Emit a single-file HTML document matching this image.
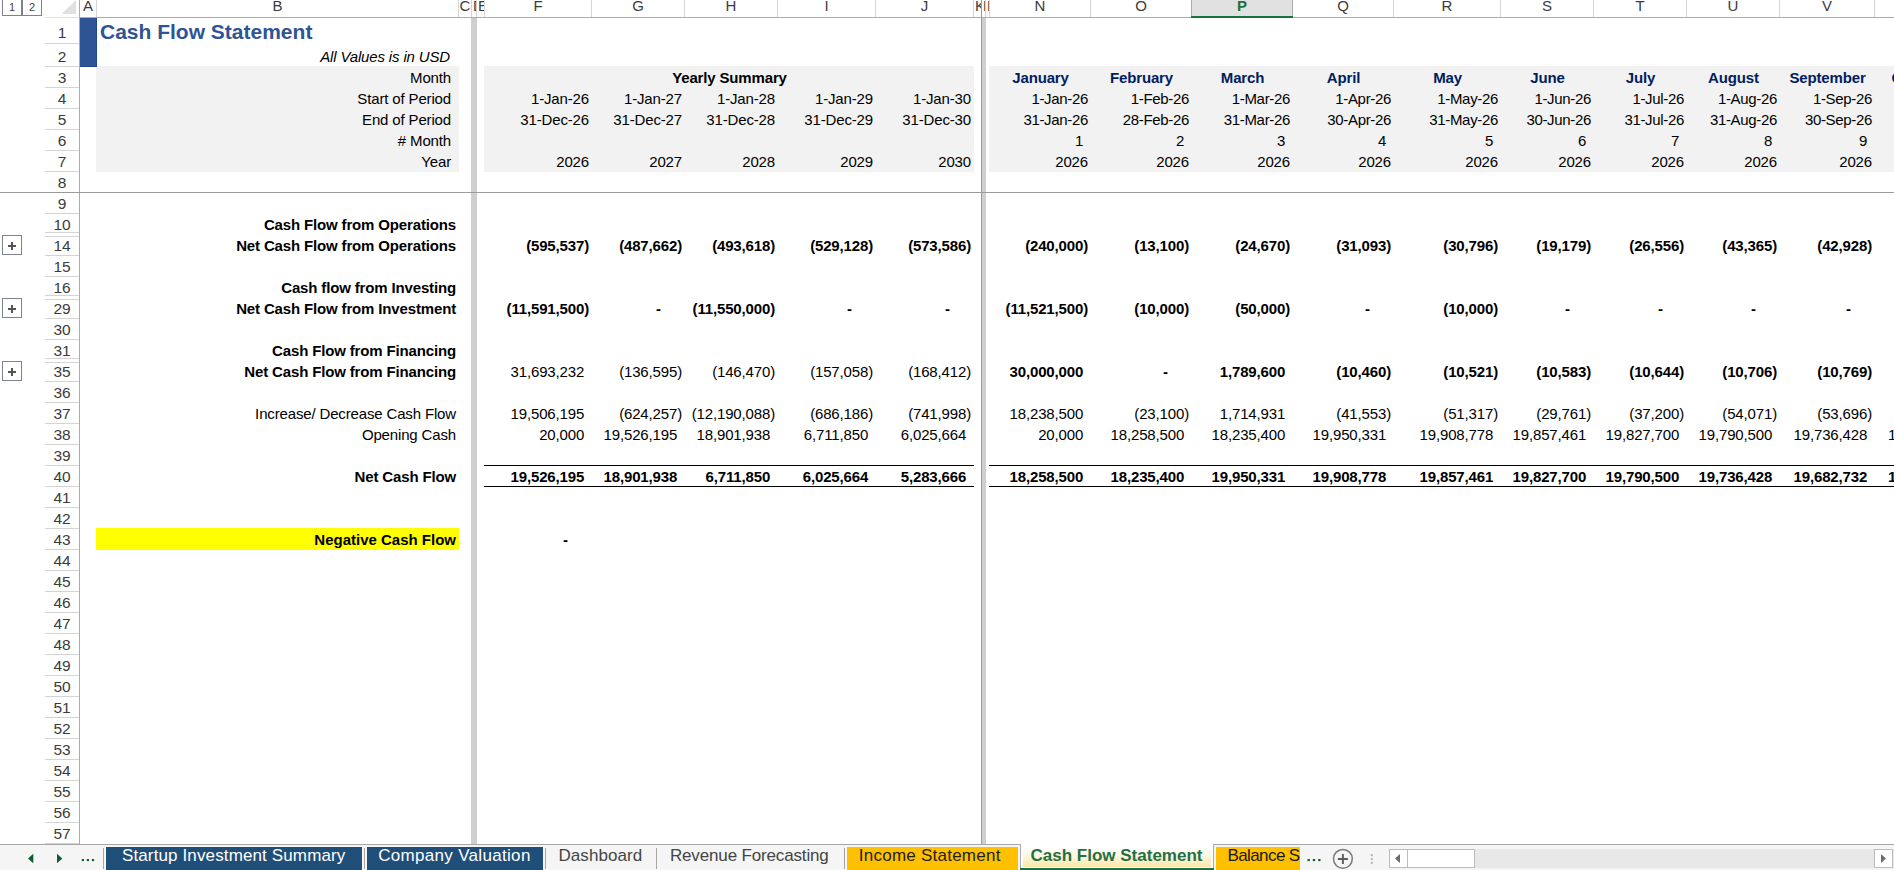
<!DOCTYPE html><html><head><meta charset="utf-8"><title>Cash Flow Statement</title><style>
html,body{margin:0;padding:0;}
body{width:1894px;height:870px;position:relative;overflow:hidden;background:#fff;font-family:"Liberation Sans",sans-serif;font-size:15px;color:#000;letter-spacing:-0.15px;}
div{position:absolute;box-sizing:border-box;white-space:nowrap;}
.ch{top:0;height:17px;line-height:12px;text-align:center;font-size:15px;letter-spacing:0;color:#3b3b3b;border-right:1px solid #d4d4d4;overflow:hidden;}
.rh{left:45px;width:34px;text-align:center;font-size:15.5px;letter-spacing:0;color:#3b3b3b;border-bottom:1px solid #d4d4d4;}
.c{height:21px;line-height:21px;text-align:right;padding-right:3px;overflow:visible;}
.b{font-weight:bold;}
.h{visibility:hidden;}
.fill{background:#f2f2f2;}
.tab{top:847px;height:23px;line-height:17px;font-size:17px;text-align:center;}
.sep{width:1px;background:#b4b4b4;top:849px;height:20px;}
</style></head><body>
<div style="left:96px;top:66px;width:363px;height:106px;background:#f2f2f2;"></div>
<div style="left:484px;top:66px;width:490px;height:106px;background:#f2f2f2;"></div>
<div style="left:989px;top:66px;width:905px;height:106px;background:#f2f2f2;"></div>
<div style="left:96px;top:528px;width:363px;height:22px;background:#ffff00;"></div>
<div style="left:80px;top:18px;width:17px;height:49px;background:#2f5496;border-right:1px solid #1f4690;border-bottom:1px solid #1f4690;"></div>
<div style="left:471px;top:18px;width:6px;height:826px;background:#d0cece;"></div>
<div style="left:982px;top:18px;width:4px;height:826px;background:#d0cece;"></div>
<div class="ch" style="left:80px;width:17px;">A</div>
<div class="ch" style="left:97px;width:362px;">B</div>
<div class="ch" style="left:459px;width:13px;">C</div>
<div class="ch" style="left:472px;width:5px;text-align:left;padding-left:1px;">D</div>
<div class="ch" style="left:477px;width:8px;text-align:left;padding-left:1px;">E</div>
<div class="ch" style="left:485px;width:107px;">F</div>
<div class="ch" style="left:592px;width:93px;">G</div>
<div class="ch" style="left:685px;width:93px;">H</div>
<div class="ch" style="left:778px;width:98px;">I</div>
<div class="ch" style="left:876px;width:98px;">J</div>
<div class="ch" style="left:974px;width:8px;text-align:left;padding-left:1px;border-right:none;">K</div>
<div class="ch" style="left:982px;width:4px;text-align:left;padding-left:1px;">L</div>
<div class="ch" style="left:986px;width:4px;text-align:left;padding-left:1px;">M</div>
<div class="ch" style="left:990px;width:101px;">N</div>
<div class="ch" style="left:1091px;width:101px;">O</div>
<div class="ch" style="left:1192px;width:101px;background:#e1e1e1;color:#17733f;font-weight:bold;border-right:1px solid #ababab;">P</div>
<div class="ch" style="left:1293px;width:101px;">Q</div>
<div class="ch" style="left:1394px;width:107px;">R</div>
<div class="ch" style="left:1501px;width:93px;">S</div>
<div class="ch" style="left:1594px;width:93px;">T</div>
<div class="ch" style="left:1687px;width:93px;">U</div>
<div class="ch" style="left:1780px;width:95px;">V</div>
<div class="ch" style="left:1875px;width:90px;">W</div>
<div style="left:45px;top:17px;width:34px;height:1px;background:#e1e1e1;"></div>
<div style="left:79px;top:17px;width:1815px;height:1px;background:#ababab;"></div>
<div style="left:1191px;top:0px;width:1px;height:16px;background:#ababab;"></div>
<div style="left:1191px;top:16px;width:102px;height:2px;background:#17733f;"></div>
<div style="left:79px;top:0px;width:1px;height:844px;background:#ababab;"></div>
<svg style="position:absolute;left:60px;top:0" width="17" height="15"><polygon points="16,0 16,14 1.5,14" fill="#e0e0e0"/></svg>
<div style="left:2px;top:-1px;width:20px;height:17px;border:1px solid #7d8291;font-size:11px;line-height:14px;letter-spacing:0;text-align:center;color:#444;">1</div>
<div style="left:22px;top:-1px;width:20px;height:17px;border:1px solid #7d8291;font-size:11px;line-height:14px;letter-spacing:0;text-align:center;color:#444;">2</div>
<div class="rh" style="top:18px;height:26px;line-height:29px;">1</div>
<div class="rh" style="top:44px;height:23px;line-height:26px;">2</div>
<div class="rh" style="top:67px;height:21px;line-height:22px;">3</div>
<div class="rh" style="top:88px;height:21px;line-height:22px;">4</div>
<div class="rh" style="top:109px;height:21px;line-height:22px;">5</div>
<div class="rh" style="top:130px;height:21px;line-height:22px;">6</div>
<div class="rh" style="top:151px;height:21px;line-height:22px;">7</div>
<div class="rh" style="top:172px;height:21px;line-height:22px;">8</div>
<div class="rh" style="top:193px;height:21px;line-height:22px;">9</div>
<div class="rh" style="top:214px;height:21px;line-height:22px;">10</div>
<div class="rh" style="top:235px;height:21px;line-height:22px;">14</div>
<div class="rh" style="top:256px;height:21px;line-height:22px;">15</div>
<div class="rh" style="top:277px;height:21px;line-height:22px;">16</div>
<div class="rh" style="top:298px;height:21px;line-height:22px;">29</div>
<div class="rh" style="top:319px;height:21px;line-height:22px;">30</div>
<div class="rh" style="top:340px;height:21px;line-height:22px;">31</div>
<div class="rh" style="top:361px;height:21px;line-height:22px;">35</div>
<div class="rh" style="top:382px;height:21px;line-height:22px;">36</div>
<div class="rh" style="top:403px;height:21px;line-height:22px;">37</div>
<div class="rh" style="top:424px;height:21px;line-height:22px;">38</div>
<div class="rh" style="top:445px;height:21px;line-height:22px;">39</div>
<div class="rh" style="top:466px;height:21px;line-height:22px;">40</div>
<div class="rh" style="top:487px;height:21px;line-height:22px;">41</div>
<div class="rh" style="top:508px;height:21px;line-height:22px;">42</div>
<div class="rh" style="top:529px;height:21px;line-height:22px;">43</div>
<div class="rh" style="top:550px;height:21px;line-height:22px;">44</div>
<div class="rh" style="top:571px;height:21px;line-height:22px;">45</div>
<div class="rh" style="top:592px;height:21px;line-height:22px;">46</div>
<div class="rh" style="top:613px;height:21px;line-height:22px;">47</div>
<div class="rh" style="top:634px;height:21px;line-height:22px;">48</div>
<div class="rh" style="top:655px;height:21px;line-height:22px;">49</div>
<div class="rh" style="top:676px;height:21px;line-height:22px;">50</div>
<div class="rh" style="top:697px;height:21px;line-height:22px;">51</div>
<div class="rh" style="top:718px;height:21px;line-height:22px;">52</div>
<div class="rh" style="top:739px;height:21px;line-height:22px;">53</div>
<div class="rh" style="top:760px;height:21px;line-height:22px;">54</div>
<div class="rh" style="top:781px;height:21px;line-height:22px;">55</div>
<div class="rh" style="top:802px;height:21px;line-height:22px;">56</div>
<div class="rh" style="top:823px;height:21px;line-height:22px;">57</div>
<div style="left:45px;top:232px;width:34px;height:3px;background:#fff;"></div>
<div style="left:45px;top:232px;width:34px;height:1px;background:#d4d4d4;"></div>
<div style="left:45px;top:236px;width:34px;height:1px;background:#d4d4d4;"></div>
<div style="left:45px;top:295px;width:34px;height:3px;background:#fff;"></div>
<div style="left:45px;top:295px;width:34px;height:1px;background:#d4d4d4;"></div>
<div style="left:45px;top:299px;width:34px;height:1px;background:#d4d4d4;"></div>
<div style="left:45px;top:358px;width:34px;height:3px;background:#fff;"></div>
<div style="left:45px;top:358px;width:34px;height:1px;background:#d4d4d4;"></div>
<div style="left:45px;top:362px;width:34px;height:1px;background:#d4d4d4;"></div>
<div style="left:2px;top:235px;width:20px;height:20px;border:1px solid #7d8291;background:#fff;"><div style="left:5px;top:9px;width:8px;height:2px;background:#555"></div><div style="left:8px;top:6px;width:2px;height:8px;background:#555"></div></div>
<div style="left:2px;top:298px;width:20px;height:20px;border:1px solid #7d8291;background:#fff;"><div style="left:5px;top:9px;width:8px;height:2px;background:#555"></div><div style="left:8px;top:6px;width:2px;height:8px;background:#555"></div></div>
<div style="left:2px;top:361px;width:20px;height:20px;border:1px solid #7d8291;background:#fff;"><div style="left:5px;top:9px;width:8px;height:2px;background:#555"></div><div style="left:8px;top:6px;width:2px;height:8px;background:#555"></div></div>
<div class="b" style="left:100px;top:18px;height:26px;line-height:27px;font-size:21px;letter-spacing:0;color:#2f5496;">Cash Flow Statement</div>
<div class="c" style="left:97px;top:44px;width:362px;padding-right:9px;font-style:italic;height:23px;line-height:25px;">All Values is in USD</div>
<div class="c" style="left:97px;top:67px;width:362px;padding-right:8px;">Month</div>
<div class="c" style="left:97px;top:88px;width:362px;padding-right:8px;">Start of Period</div>
<div class="c" style="left:97px;top:109px;width:362px;padding-right:8px;">End of Period</div>
<div class="c" style="left:97px;top:130px;width:362px;padding-right:8px;"># Month</div>
<div class="c" style="left:97px;top:151px;width:362px;padding-right:8px;">Year</div>
<div class="c b" style="left:97px;top:214px;width:362px;">Cash Flow from Operations</div>
<div class="c b" style="left:97px;top:235px;width:362px;">Net Cash Flow from Operations</div>
<div class="c b" style="left:97px;top:277px;width:362px;">Cash flow from Investing</div>
<div class="c b" style="left:97px;top:298px;width:362px;">Net Cash Flow from Investment</div>
<div class="c b" style="left:97px;top:340px;width:362px;">Cash Flow from Financing</div>
<div class="c b" style="left:97px;top:361px;width:362px;">Net Cash Flow from Financing</div>
<div class="c b" style="left:97px;top:466px;width:362px;">Net Cash Flow</div>
<div class="c b" style="left:97px;top:529px;width:362px;letter-spacing:0;">Negative Cash Flow</div>
<div class="c" style="left:97px;top:403px;width:362px;">Increase/ Decrease Cash Flow</div>
<div class="c" style="left:97px;top:424px;width:362px;">Opening Cash</div>
<div class="c b" style="left:485px;top:67px;width:489px;text-align:center;padding-right:0;">Yearly Summary</div>
<div class="c" style="left:485px;top:88px;width:107px;">1-Jan-26</div>
<div class="c" style="left:485px;top:109px;width:107px;">31-Dec-26</div>
<div class="c" style="left:485px;top:151px;width:107px;">2026</div>
<div class="c" style="left:592px;top:88px;width:93px;">1-Jan-27</div>
<div class="c" style="left:592px;top:109px;width:93px;">31-Dec-27</div>
<div class="c" style="left:592px;top:151px;width:93px;">2027</div>
<div class="c" style="left:685px;top:88px;width:93px;">1-Jan-28</div>
<div class="c" style="left:685px;top:109px;width:93px;">31-Dec-28</div>
<div class="c" style="left:685px;top:151px;width:93px;">2028</div>
<div class="c" style="left:778px;top:88px;width:98px;">1-Jan-29</div>
<div class="c" style="left:778px;top:109px;width:98px;">31-Dec-29</div>
<div class="c" style="left:778px;top:151px;width:98px;">2029</div>
<div class="c" style="left:876px;top:88px;width:98px;">1-Jan-30</div>
<div class="c" style="left:876px;top:109px;width:98px;">31-Dec-30</div>
<div class="c" style="left:876px;top:151px;width:98px;">2030</div>
<div class="c b" style="left:990px;top:67px;width:101px;text-align:center;padding-right:0;color:#002060;">January</div>
<div class="c" style="left:990px;top:88px;width:101px;letter-spacing:-0.33px;">1-Jan-26</div>
<div class="c" style="left:990px;top:109px;width:101px;letter-spacing:-0.33px;">31-Jan-26</div>
<div class="c" style="left:990px;top:130px;width:101px;">1<span class="h">)</span></div>
<div class="c" style="left:990px;top:151px;width:101px;">2026</div>
<div class="c b" style="left:1091px;top:67px;width:101px;text-align:center;padding-right:0;color:#002060;">February</div>
<div class="c" style="left:1091px;top:88px;width:101px;letter-spacing:-0.33px;">1-Feb-26</div>
<div class="c" style="left:1091px;top:109px;width:101px;letter-spacing:-0.33px;">28-Feb-26</div>
<div class="c" style="left:1091px;top:130px;width:101px;">2<span class="h">)</span></div>
<div class="c" style="left:1091px;top:151px;width:101px;">2026</div>
<div class="c b" style="left:1192px;top:67px;width:101px;text-align:center;padding-right:0;color:#002060;">March</div>
<div class="c" style="left:1192px;top:88px;width:101px;letter-spacing:-0.33px;">1-Mar-26</div>
<div class="c" style="left:1192px;top:109px;width:101px;letter-spacing:-0.33px;">31-Mar-26</div>
<div class="c" style="left:1192px;top:130px;width:101px;">3<span class="h">)</span></div>
<div class="c" style="left:1192px;top:151px;width:101px;">2026</div>
<div class="c b" style="left:1293px;top:67px;width:101px;text-align:center;padding-right:0;color:#002060;">April</div>
<div class="c" style="left:1293px;top:88px;width:101px;letter-spacing:-0.33px;">1-Apr-26</div>
<div class="c" style="left:1293px;top:109px;width:101px;letter-spacing:-0.33px;">30-Apr-26</div>
<div class="c" style="left:1293px;top:130px;width:101px;">4<span class="h">)</span></div>
<div class="c" style="left:1293px;top:151px;width:101px;">2026</div>
<div class="c b" style="left:1394px;top:67px;width:107px;text-align:center;padding-right:0;color:#002060;">May</div>
<div class="c" style="left:1394px;top:88px;width:107px;letter-spacing:-0.33px;">1-May-26</div>
<div class="c" style="left:1394px;top:109px;width:107px;letter-spacing:-0.33px;">31-May-26</div>
<div class="c" style="left:1394px;top:130px;width:107px;">5<span class="h">)</span></div>
<div class="c" style="left:1394px;top:151px;width:107px;">2026</div>
<div class="c b" style="left:1501px;top:67px;width:93px;text-align:center;padding-right:0;color:#002060;">June</div>
<div class="c" style="left:1501px;top:88px;width:93px;letter-spacing:-0.33px;">1-Jun-26</div>
<div class="c" style="left:1501px;top:109px;width:93px;letter-spacing:-0.33px;">30-Jun-26</div>
<div class="c" style="left:1501px;top:130px;width:93px;">6<span class="h">)</span></div>
<div class="c" style="left:1501px;top:151px;width:93px;">2026</div>
<div class="c b" style="left:1594px;top:67px;width:93px;text-align:center;padding-right:0;color:#002060;">July</div>
<div class="c" style="left:1594px;top:88px;width:93px;letter-spacing:-0.33px;">1-Jul-26</div>
<div class="c" style="left:1594px;top:109px;width:93px;letter-spacing:-0.33px;">31-Jul-26</div>
<div class="c" style="left:1594px;top:130px;width:93px;">7<span class="h">)</span></div>
<div class="c" style="left:1594px;top:151px;width:93px;">2026</div>
<div class="c b" style="left:1687px;top:67px;width:93px;text-align:center;padding-right:0;color:#002060;">August</div>
<div class="c" style="left:1687px;top:88px;width:93px;letter-spacing:-0.33px;">1-Aug-26</div>
<div class="c" style="left:1687px;top:109px;width:93px;letter-spacing:-0.33px;">31-Aug-26</div>
<div class="c" style="left:1687px;top:130px;width:93px;">8<span class="h">)</span></div>
<div class="c" style="left:1687px;top:151px;width:93px;">2026</div>
<div class="c b" style="left:1780px;top:67px;width:95px;text-align:center;padding-right:0;color:#002060;">September</div>
<div class="c" style="left:1780px;top:88px;width:95px;letter-spacing:-0.33px;">1-Sep-26</div>
<div class="c" style="left:1780px;top:109px;width:95px;letter-spacing:-0.33px;">30-Sep-26</div>
<div class="c" style="left:1780px;top:130px;width:95px;">9<span class="h">)</span></div>
<div class="c" style="left:1780px;top:151px;width:95px;">2026</div>
<div class="c b" style="left:1891.5px;top:67px;text-align:left;color:#002060;">October</div>
<div class="c b" style="left:485px;top:235px;width:107px;">(595,537)</div>
<div class="c b" style="left:592px;top:235px;width:93px;">(487,662)</div>
<div class="c b" style="left:685px;top:235px;width:93px;">(493,618)</div>
<div class="c b" style="left:778px;top:235px;width:98px;">(529,128)</div>
<div class="c b" style="left:876px;top:235px;width:98px;">(573,586)</div>
<div class="c b" style="left:990px;top:235px;width:101px;">(240,000)</div>
<div class="c b" style="left:1091px;top:235px;width:101px;">(13,100)</div>
<div class="c b" style="left:1192px;top:235px;width:101px;">(24,670)</div>
<div class="c b" style="left:1293px;top:235px;width:101px;">(31,093)</div>
<div class="c b" style="left:1394px;top:235px;width:107px;">(30,796)</div>
<div class="c b" style="left:1501px;top:235px;width:93px;">(19,179)</div>
<div class="c b" style="left:1594px;top:235px;width:93px;">(26,556)</div>
<div class="c b" style="left:1687px;top:235px;width:93px;">(43,365)</div>
<div class="c b" style="left:1780px;top:235px;width:95px;">(42,928)</div>
<div class="c b" style="left:485px;top:298px;width:107px;">(11,591,500)</div>
<div class="c b" style="left:592px;top:298px;width:93px;">-<span class="h">00)</span></div>
<div class="c b" style="left:685px;top:298px;width:93px;">(11,550,000)</div>
<div class="c b" style="left:778px;top:298px;width:98px;">-<span class="h">00)</span></div>
<div class="c b" style="left:876px;top:298px;width:98px;">-<span class="h">00)</span></div>
<div class="c b" style="left:990px;top:298px;width:101px;">(11,521,500)</div>
<div class="c b" style="left:1091px;top:298px;width:101px;">(10,000)</div>
<div class="c b" style="left:1192px;top:298px;width:101px;">(50,000)</div>
<div class="c b" style="left:1293px;top:298px;width:101px;">-<span class="h">00)</span></div>
<div class="c b" style="left:1394px;top:298px;width:107px;">(10,000)</div>
<div class="c b" style="left:1501px;top:298px;width:93px;">-<span class="h">00)</span></div>
<div class="c b" style="left:1594px;top:298px;width:93px;">-<span class="h">00)</span></div>
<div class="c b" style="left:1687px;top:298px;width:93px;">-<span class="h">00)</span></div>
<div class="c b" style="left:1780px;top:298px;width:95px;">-<span class="h">00)</span></div>
<div class="c" style="left:485px;top:361px;width:107px;">31,693,232<span class="h">)</span></div>
<div class="c" style="left:592px;top:361px;width:93px;">(136,595)</div>
<div class="c" style="left:685px;top:361px;width:93px;">(146,470)</div>
<div class="c" style="left:778px;top:361px;width:98px;">(157,058)</div>
<div class="c" style="left:876px;top:361px;width:98px;">(168,412)</div>
<div class="c b" style="left:990px;top:361px;width:101px;">30,000,000<span class="h">)</span></div>
<div class="c b" style="left:1091px;top:361px;width:101px;">-<span class="h">00)</span></div>
<div class="c b" style="left:1192px;top:361px;width:101px;">1,789,600<span class="h">)</span></div>
<div class="c b" style="left:1293px;top:361px;width:101px;">(10,460)</div>
<div class="c b" style="left:1394px;top:361px;width:107px;">(10,521)</div>
<div class="c b" style="left:1501px;top:361px;width:93px;">(10,583)</div>
<div class="c b" style="left:1594px;top:361px;width:93px;">(10,644)</div>
<div class="c b" style="left:1687px;top:361px;width:93px;">(10,706)</div>
<div class="c b" style="left:1780px;top:361px;width:95px;">(10,769)</div>
<div class="c" style="left:485px;top:403px;width:107px;">19,506,195<span class="h">)</span></div>
<div class="c" style="left:592px;top:403px;width:93px;">(624,257)</div>
<div class="c" style="left:685px;top:403px;width:93px;">(12,190,088)</div>
<div class="c" style="left:778px;top:403px;width:98px;">(686,186)</div>
<div class="c" style="left:876px;top:403px;width:98px;">(741,998)</div>
<div class="c" style="left:990px;top:403px;width:101px;">18,238,500<span class="h">)</span></div>
<div class="c" style="left:1091px;top:403px;width:101px;">(23,100)</div>
<div class="c" style="left:1192px;top:403px;width:101px;">1,714,931<span class="h">)</span></div>
<div class="c" style="left:1293px;top:403px;width:101px;">(41,553)</div>
<div class="c" style="left:1394px;top:403px;width:107px;">(51,317)</div>
<div class="c" style="left:1501px;top:403px;width:93px;">(29,761)</div>
<div class="c" style="left:1594px;top:403px;width:93px;">(37,200)</div>
<div class="c" style="left:1687px;top:403px;width:93px;">(54,071)</div>
<div class="c" style="left:1780px;top:403px;width:95px;">(53,696)</div>
<div class="c" style="left:485px;top:424px;width:107px;">20,000<span class="h">)</span></div>
<div class="c" style="left:592px;top:424px;width:93px;">19,526,195<span class="h">)</span></div>
<div class="c" style="left:685px;top:424px;width:93px;">18,901,938<span class="h">)</span></div>
<div class="c" style="left:778px;top:424px;width:98px;">6,711,850<span class="h">)</span></div>
<div class="c" style="left:876px;top:424px;width:98px;">6,025,664<span class="h">)</span></div>
<div class="c" style="left:990px;top:424px;width:101px;">20,000<span class="h">)</span></div>
<div class="c" style="left:1091px;top:424px;width:101px;">18,258,500<span class="h">)</span></div>
<div class="c" style="left:1192px;top:424px;width:101px;">18,235,400<span class="h">)</span></div>
<div class="c" style="left:1293px;top:424px;width:101px;">19,950,331<span class="h">)</span></div>
<div class="c" style="left:1394px;top:424px;width:107px;">19,908,778<span class="h">)</span></div>
<div class="c" style="left:1501px;top:424px;width:93px;">19,857,461<span class="h">)</span></div>
<div class="c" style="left:1594px;top:424px;width:93px;">19,827,700<span class="h">)</span></div>
<div class="c" style="left:1687px;top:424px;width:93px;">19,790,500<span class="h">)</span></div>
<div class="c" style="left:1780px;top:424px;width:95px;">19,736,428<span class="h">)</span></div>
<div class="c b" style="left:485px;top:466px;width:107px;">19,526,195<span class="h">)</span></div>
<div class="c b" style="left:592px;top:466px;width:93px;">18,901,938<span class="h">)</span></div>
<div class="c b" style="left:685px;top:466px;width:93px;">6,711,850<span class="h">)</span></div>
<div class="c b" style="left:778px;top:466px;width:98px;">6,025,664<span class="h">)</span></div>
<div class="c b" style="left:876px;top:466px;width:98px;">5,283,666<span class="h">)</span></div>
<div class="c b" style="left:990px;top:466px;width:101px;">18,258,500<span class="h">)</span></div>
<div class="c b" style="left:1091px;top:466px;width:101px;">18,235,400<span class="h">)</span></div>
<div class="c b" style="left:1192px;top:466px;width:101px;">19,950,331<span class="h">)</span></div>
<div class="c b" style="left:1293px;top:466px;width:101px;">19,908,778<span class="h">)</span></div>
<div class="c b" style="left:1394px;top:466px;width:107px;">19,857,461<span class="h">)</span></div>
<div class="c b" style="left:1501px;top:466px;width:93px;">19,827,700<span class="h">)</span></div>
<div class="c b" style="left:1594px;top:466px;width:93px;">19,790,500<span class="h">)</span></div>
<div class="c b" style="left:1687px;top:466px;width:93px;">19,736,428<span class="h">)</span></div>
<div class="c b" style="left:1780px;top:466px;width:95px;">19,682,732<span class="h">)</span></div>
<div class="c" style="left:1888px;top:424px;text-align:left;">19,682,732</div>
<div class="c b" style="left:1888px;top:466px;text-align:left;">19,628,544</div>
<div class="c b" style="left:485px;top:529px;width:107px;">-<span class="h">00)</span></div>
<div style="left:484px;top:465px;width:490px;height:1px;background:#000;"></div>
<div style="left:484px;top:486px;width:490px;height:1px;background:#000;"></div>
<div style="left:989px;top:465px;width:905px;height:1px;background:#000;"></div>
<div style="left:989px;top:486px;width:905px;height:1px;background:#000;"></div>
<div style="left:0px;top:192px;width:1894px;height:1px;background:#9b9b9b;"></div>
<div style="left:981px;top:0px;width:1px;height:844px;background:#9b9b9b;"></div>
<div style="left:0px;top:844px;width:1894px;height:26px;background:#f5f5f5;"></div>
<div style="left:0px;top:844px;width:1894px;height:1px;background:#a6a6a6;"></div>
<svg style="position:absolute;left:0;top:845px" width="104" height="25"><polygon points="28,13.5 33.3,8.8 33.3,18.2" fill="#0e5c2f"/><polygon points="62.3,13.5 57,8.8 57,18.2" fill="#0e5c2f"/><g fill="#0e5c2f"><rect x="81.8" y="14" width="2.2" height="2.1"/><rect x="86.8" y="14" width="2.2" height="2.1"/><rect x="91.9" y="14" width="2.2" height="2.1"/></g></svg>
<div style="left:103px;top:848px;width:1px;height:21px;background:#a6a6a6;"></div>
<div style="left:106px;top:847px;width:256px;height:23px;background:#1f4e79;"></div>
<div class="tab" style="left:83.715px;width:300px;color:#fff;letter-spacing:0.13px;">Startup Investment Summary</div>
<div style="left:367px;top:847px;width:176px;height:23px;background:#1f4e79;"></div>
<div class="tab" style="left:304.41px;width:300px;color:#fff;letter-spacing:0.32px;">Company Valuation</div>
<div class="tab" style="left:450.445px;width:300px;color:#444;letter-spacing:0.09px;">Dashboard</div>
<div class="tab" style="left:599.3249999999999px;width:300px;color:#444;letter-spacing:-0.15px;">Revenue Forecasting</div>
<div style="left:847px;top:847px;width:171px;height:23px;background:#ffc000;"></div>
<div class="tab" style="left:779.72px;width:300px;color:#222;letter-spacing:0.24px;">Income Statement</div>
<div style="left:364px;top:848px;width:1px;height:21px;background:#a6a6a6;"></div>
<div style="left:545px;top:848px;width:1px;height:21px;background:#a6a6a6;"></div>
<div style="left:656px;top:848px;width:1px;height:21px;background:#a6a6a6;"></div>
<div style="left:844px;top:848px;width:1px;height:21px;background:#a6a6a6;"></div>
<div style="left:1020px;top:844px;width:194px;height:26px;background:#fff;"></div>
<div style="left:1020px;top:844px;width:1px;height:24px;background:#ababab;"></div>
<div style="left:1213px;top:844px;width:1px;height:24px;background:#ababab;"></div>
<div style="left:1023px;top:847px;width:188px;height:20px;background:#fff;background:linear-gradient(#ffffff 0%,#fff6e0 45%,#fde6a8 100%);"></div>
<div style="left:1020px;top:868px;width:194px;height:2px;background:#1e7145;"></div>
<div class="tab b" style="left:966.5px;width:300px;color:#1e7145;letter-spacing:0px;">Cash Flow Statement</div>
<div style="left:1216px;top:847px;width:84px;height:23px;background:#ffc000;"></div>
<div class="tab" style="left:1216px;width:84px;color:#1a1a1a;text-align:left;padding-left:11.5px;letter-spacing:-0.6px;overflow:hidden;">Balance Sheet</div>
<svg style="position:absolute;left:1300px;top:845px" width="100" height="25"><g fill="#0e5c2f"><rect x="7.5" y="14" width="2.3" height="2.1"/><rect x="12.8" y="14" width="2.3" height="2.1"/><rect x="18.2" y="14" width="2.3" height="2.1"/></g><circle cx="42.9" cy="13.8" r="9.4" fill="none" stroke="#7a7a7a" stroke-width="1.5"/><path d="M37.9 14h10M42.9 9v10" stroke="#5a5a5a" stroke-width="1.9"/><g fill="#b5b5b5"><rect x="70.8" y="9.2" width="2" height="2"/><rect x="70.8" y="13" width="2" height="2"/><rect x="70.8" y="16.8" width="2" height="2"/></g></svg>
<div style="left:1389px;top:849px;width:505px;height:19px;background:#e8e8e8;"></div>
<div style="left:1389px;top:849px;width:19px;height:19px;background:#fff;border:1px solid #bcbcbc;"></div>
<div style="left:1407px;top:849px;width:68px;height:19px;background:#fff;border:1px solid #bcbcbc;"></div>
<div style="left:1874px;top:849px;width:19px;height:19px;background:#fff;border:1px solid #bcbcbc;"></div>
<svg style="position:absolute;left:1389px;top:849px" width="505" height="19"><polygon points="6,9.5 11,5 11,14" fill="#6d6d6d"/><polygon points="497,9.5 492,5 492,14" fill="#6d6d6d"/></svg>
</body></html>
